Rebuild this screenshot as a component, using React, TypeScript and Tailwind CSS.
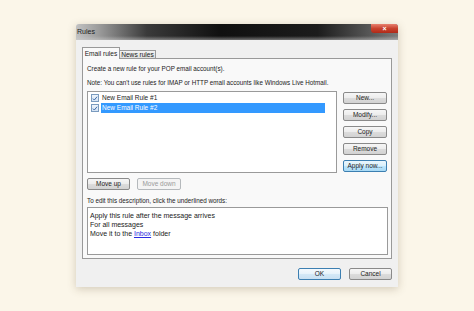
export default function App() {
  const font = { fontFamily: '"Liberation Sans", Arial, sans-serif' };
  const btn =
    'flex h-[12px] items-center justify-center rounded-[2px] border border-[#8a8a8a] bg-[linear-gradient(180deg,#f6f6f6_0%,#ececec_50%,#dcdcdc_51%,#d2d2d2_100%)] text-[6.5px] text-[#222]';

  return (
    <div className="h-[311px] w-[474px] bg-[#fbf6e9] pl-[76px] pt-[24px]" style={font}>
      <div className="flex h-[263px] w-[322px] flex-col overflow-hidden rounded-t-[3px] bg-[#f0f0f0] shadow-[0_2px_8px_rgba(90,70,40,0.25)]">
        {/* Title bar */}
        <div className="relative flex h-[16px] items-center bg-[linear-gradient(90deg,#c2c2c2_0%,#9c9c9c_7%,#3a3a3a_22%,#101010_45%,#1c1c1c_75%,#5a5a5a_92%,#7c7c7c_100%)]">
          <span className="pl-[1px] text-[7px] text-[#1a1a1a]">Rules</span>
          <div className="absolute right-0 top-0 flex h-[9px] w-[27px] items-center justify-center rounded-bl-[3px] bg-[linear-gradient(180deg,#e8806f_0%,#c8422e_50%,#b02a18_100%)] text-[7px] font-bold leading-none text-white">
            ×
          </div>
          <div className="absolute bottom-0 left-0 right-0 h-[4px] bg-[linear-gradient(180deg,rgba(255,255,255,0),rgba(210,210,210,0.5))]" />
        </div>

        <div className="flex flex-1 flex-col px-[6px] pt-[7px]">
          {/* Tabs */}
          <div className="flex h-[11px] items-end">
            <div className="relative z-10 -mb-px flex h-[12px] w-[38px] items-center justify-center border border-b-0 border-[#999] bg-[#f9f9f9] text-[6.6px] text-[#222]">
              Email rules
            </div>
            <div className="flex h-[8px] w-[36px] items-center justify-center border border-l-0 border-b-0 border-[#999] bg-[linear-gradient(180deg,#f2f2f2,#dedede)] text-[6.6px] text-[#222]">
              News rules
            </div>
          </div>

          {/* Panel */}
          <div className="flex h-[201px] w-[310px] flex-col border border-[#999] bg-[#f9f9f9] pl-[4px] pr-[3px] pt-[5px]">
            <div className="flex h-[10px] items-center text-[6.3px] text-[#222]">
              Create a new rule for your POP email account(s).
            </div>
            <div className="mt-[4px] flex h-[10px] items-center text-[6.3px] text-[#222]">
              Note: You can't use rules for IMAP or HTTP email accounts like Windows Live Hotmail.
            </div>

            <div className="mt-[3px] flex gap-[6px]">
              <div className="flex h-[82px] w-[250px] flex-col border border-[#9a9a9a] bg-white pl-[3px] pt-[1px]">
                {['New Email Rule #1', 'New Email Rule #2'].map((r, i) => (
                  <div key={r} className="flex h-[10px] items-center">
                    <div className="flex h-[8px] w-[8px] items-center justify-center border border-[#7a9bbf] bg-[linear-gradient(180deg,#eef4fb,#d3e2f3)]">
                      <svg viewBox="0 0 8 8" className="h-[7px] w-[7px]">
                        <path d="M1.3 4.2 L3.1 6 L6.8 1.6" fill="none" stroke="#3b69a6" strokeWidth="1.3" />
                      </svg>
                    </div>
                    <div
                      className={
                        i === 1
                          ? 'ml-[2px] flex h-[10px] w-[224px] items-center bg-[#3399ff] pl-[1px] text-[6.5px] text-white'
                          : 'ml-[2px] flex h-[10px] items-center pl-[1px] text-[6.5px] text-[#222]'
                      }
                    >
                      {r}
                    </div>
                  </div>
                ))}
              </div>
              <div className="flex w-[44px] flex-col gap-[5px] pt-[1px]">
                <div className={btn}>New...</div>
                <div className={btn}>Modify...</div>
                <div className={btn}>Copy</div>
                <div className={btn}>Remove</div>
                <div className="flex h-[12px] items-center justify-center rounded-[2px] border border-[#3c7fb1] bg-[linear-gradient(180deg,#eaf6fd_0%,#d9f0fc_50%,#bee6fd_51%,#a7d9f5_100%)] text-[6.5px] text-[#222]">
                  Apply now...
                </div>
              </div>
            </div>

            <div className="mt-[5px] flex gap-[7px]">
              <div className={btn + ' w-[43px]'}>Move up</div>
              <div className="flex h-[12px] w-[44px] items-center justify-center rounded-[2px] border border-[#b5b9bc] bg-[#f4f4f4] text-[6.5px] text-[#9a9a9a]">
                Move down
              </div>
            </div>

            <div className="mt-[6px] flex h-[10px] items-center text-[6.3px] text-[#222]">
              To edit this description, click the underlined words:
            </div>
            <div className="mt-px flex h-[48px] w-[301px] flex-col border border-[#9a9a9a] bg-white pl-[2px] pt-[3px] text-[7px] leading-[9px] text-[#222]">
              <div>Apply this rule after the message arrives</div>
              <div>For all messages</div>
              <div>
                Move it to the <span className="text-[#2a2ae0] underline">Inbox</span> folder
              </div>
            </div>
          </div>

          {/* Footer */}
          <div className="mt-[9px] flex w-[310px] justify-end gap-[8px]">
            <div className="flex h-[12px] w-[43px] items-center justify-center rounded-[2px] border border-[#3c7fb1] bg-[linear-gradient(180deg,#f4f9fd_0%,#e6f2fb_50%,#d4e8f7_51%,#c8e0f2_100%)] text-[6.5px] text-[#222]">
              OK
            </div>
            <div className={btn + ' w-[43px]'}>Cancel</div>
          </div>
        </div>
      </div>
    </div>
  );
}
